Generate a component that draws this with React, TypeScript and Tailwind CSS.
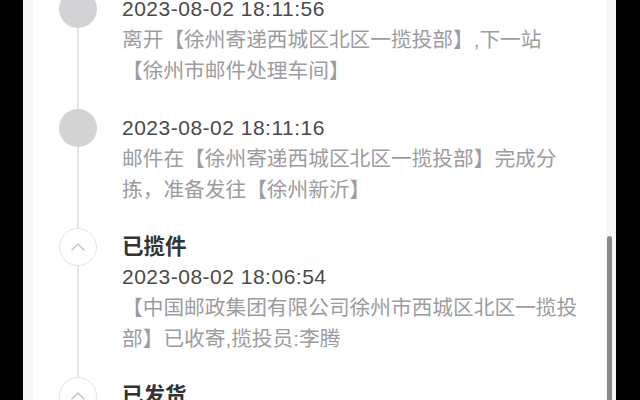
import React from 'react';

type Step = {
  title?: string;
  time: string;
  lines: string[];
  kind: 'dot' | 'ring';
};

const steps: Step[] = [
  {
    time: '2023-08-02 18:11:56',
    lines: ['离开【徐州寄递西城区北区一揽投部】,下一站', '【徐州市邮件处理车间】'],
    kind: 'dot',
  },
  {
    time: '2023-08-02 18:11:16',
    lines: ['邮件在【徐州寄递西城区北区一揽投部】完成分', '拣，准备发往【徐州新沂】'],
    kind: 'dot',
  },
  {
    title: '已揽件',
    time: '2023-08-02 18:06:54',
    lines: ['【中国邮政集团有限公司徐州市西城区北区一揽投', '部】已收寄,揽投员:李腾'],
    kind: 'ring',
  },
  {
    title: '已发货',
    time: '2023-08-02 17:58:12',
    lines: [],
    kind: 'ring',
  },
];

const Marker = ({ kind }: { kind: Step['kind'] }) =>
  kind === 'dot' ? (
    <div className="relative z-10 ml-[26px] mt-[-4px] h-[38px] w-[38px] rounded-full bg-[#d3d3d5]" />
  ) : (
    <div className="relative z-10 ml-[26px] mt-[-4px] flex h-[38px] w-[38px] items-center justify-center rounded-full border border-[#e4e4e6] bg-white">
      <svg width="16" height="10" viewBox="0 0 16 10" fill="none">
        <path d="M2 8 L8 2 L14 8" stroke="#c4c4c6" strokeWidth="1.5" strokeLinecap="round" strokeLinejoin="round" />
      </svg>
    </div>
  );

export default function App() {
  return (
    <div
      className="flex h-[400px] w-[640px] overflow-hidden bg-black"
      style={{ fontFamily: '"Liberation Sans", "Noto Sans CJK SC", sans-serif' }}
    >
      <div className="w-[23px] shrink-0" />
      <div className="w-[10px] shrink-0 bg-[#f6f6f8]" />
      <div className="relative h-full flex-1 overflow-hidden bg-white">
        <div className="absolute bottom-0 left-[44px] top-0 w-[2px] bg-[#e4e4e6]" />
        <div className="mt-[-6px] flex flex-col">
          {steps.map((s, i) => (
            <div key={i} className="flex pb-[27px]">
              <div className="w-[89px] shrink-0">
                <Marker kind={s.kind} />
              </div>
              <div className="flex flex-col">
                {s.title && (
                  <div className="text-[21.5px] font-semibold leading-[30px] text-[#333333]">{s.title}</div>
                )}
                <div className="text-[21px] leading-[30px] tracking-[0.5px] text-[#4a4a4a]">{s.time}</div>
                <div className="text-[20.7px] leading-[31px] text-[#9c9c9e] whitespace-nowrap">
                  {s.lines.map((l, j) => (
                    <div key={j}>{l}</div>
                  ))}
                </div>
              </div>
            </div>
          ))}
        </div>
      </div>
      <div className="relative w-[10px] shrink-0 bg-[#f6f6f8]">
        <div className="absolute left-[1px] top-[236px] h-[180px] w-[5px] rounded-full bg-[#8a8a8c]" />
      </div>
      <div className="w-[24px] shrink-0" />
    </div>
  );
}
